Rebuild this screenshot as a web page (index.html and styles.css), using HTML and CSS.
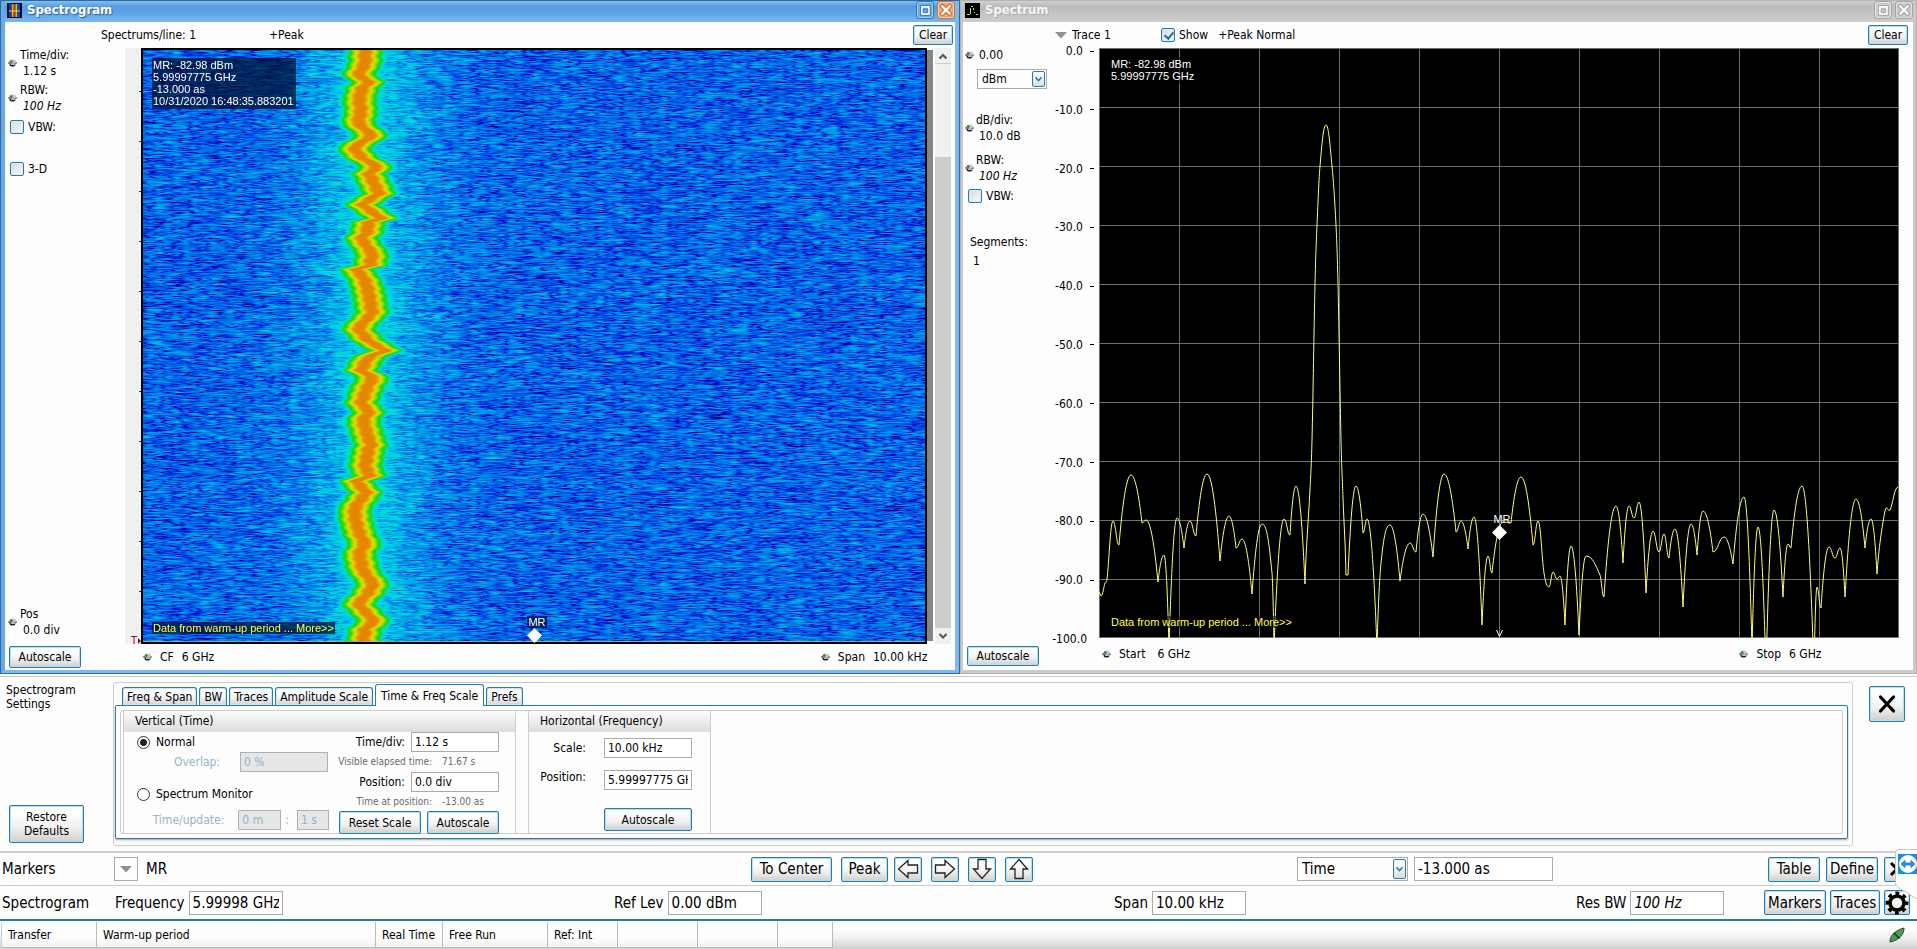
FILE: index.html
```html
<!DOCTYPE html>
<html lang="en">
<head>
    <meta charset="utf-8">
    <title>Spectrogram</title>
    <link rel="stylesheet" href="styles.css">
</head>
<body>
    <svg class="defs" width="0" height="0" aria-hidden="true">
        <symbol id="knob" viewBox="0 0 9 8">
            <ellipse cx="4.5" cy="5" rx="3" ry="2.6" fill="#1c1c50"/>
            <rect x="0" y="3" width="9" height="2" rx="1" fill="#777"/>
            <ellipse cx="5" cy="2.6" rx="3" ry="2.2" fill="#c4c8c4"/>
            <circle cx="3.2" cy="2.5" r="1.5" fill="#3f8a33"/>
            <rect x="3" y="5" width="4" height="1" fill="#b8b8d8"/>
        </symbol>
        <symbol id="restore" viewBox="0 0 18 18">
            <path d="M5.5 5.5h8v8h-8z" fill="none" stroke="#fff" stroke-width="2"/>
            <path d="M4 4h11v11H4zM7 8h5v4H7z" fill="none" stroke="currentColor" stroke-width="1"/>
        </symbol>
        <symbol id="close" viewBox="0 0 18 18">
            <path d="M5 5l8 8M13 5l-8 8" stroke="currentColor" stroke-width="5" stroke-linecap="square"/>
            <path d="M5 5l8 8M13 5l-8 8" stroke="#fff" stroke-width="2.6" stroke-linecap="square"/>
        </symbol>
        <symbol id="chevron" viewBox="0 0 13 16">
            <path d="M3 6l3.5 4L10 6" fill="none" stroke="#1e6f9f" stroke-width="1.6"/>
        </symbol>
        <symbol id="arrow" viewBox="0 0 22 20">
            <path d="M1.5 10L11 1.5V6H20.5V14H11V18.5Z" fill="none" stroke="#222" stroke-width="1.3"/>
        </symbol>
    </svg>

    <main class="windows">
        <section class="window active">
            <header class="titlebar">
                <svg class="app-icon" viewBox="0 0 15 15">
                    <rect width="15" height="15" fill="#050530"/>
                    <path d="M3 1v13M12 1v13" stroke="#0d3fb5" stroke-width="2"/>
                    <path d="M5 1v13M10 1v13" stroke="#3fbf5f" stroke-width="1"/>
                    <path d="M6 1v13M9 1v13" stroke="#f2e12a" stroke-width="1.5"/>
                    <path d="M7.5 1v13" stroke="#d42020" stroke-width="2"/>
                    <path d="M2 8h11" stroke="#f2e12a" stroke-width="1"/>
                </svg>
                <h2>Spectrogram</h2>
                <button class="win-btn" aria-label="Restore"><svg><use href="#restore"/></svg></button>
                <button class="win-btn win-close" aria-label="Close"><svg><use href="#close"/></svg></button>
            </header>
            <div class="window-body">
                <div class="plot-header spectrogram-header">
                    <span class="lines">Spectrums/line: 1</span>
                    <span>+Peak</span>
                    <button class="btn clear">Clear</button>
                </div>
                <div class="columns">
                    <div class="side">
                        <div class="knob">
                            <svg class="knob-icon"><use href="#knob"/></svg>
                            <label for="timeDiv">Time/div:</label>
                            <input id="timeDiv" type="text" value="1.12 s">
                        </div>
                        <div class="knob">
                            <svg class="knob-icon"><use href="#knob"/></svg>
                            <label for="rbw1">RBW:</label>
                            <input id="rbw1" class="auto" type="text" value="100 Hz">
                        </div>
                        <label class="check"><input type="checkbox"> VBW:</label>
                        <label class="check check-3d"><input type="checkbox"> 3-D</label>
                        <div class="knob pos">
                            <svg class="knob-icon"><use href="#knob"/></svg>
                            <label for="pos">Pos</label>
                            <input id="pos" type="text" value="0.0 div">
                        </div>
                        <button class="btn autoscale">Autoscale</button>
                    </div>
                    <div class="main">
                        <div class="plot-row">
                            <div class="time-axis">
                                <i></i><i></i><i></i><i></i><i></i><i></i><i></i><i></i><i></i><i></i><i></i>
                                <span class="trigger">T</span>
                            </div>
                            <div class="spectrogram">
                                <canvas id="waterfall" width="780" height="592"></canvas>
                                <p class="readout">MR: -82.98 dBm<br>5.99997775 GHz<br>-13.000 as<br>10/31/2020 16:48:35.883201</p>
                                <a class="notice" href="#">Data from warm-up period ... More&gt;&gt;</a>
                                <div class="marker">
                                    <span>MR</span>
                                    <svg viewBox="0 0 16 16"><path d="M8 0l8 8-8 8-8-8z" fill="#fff"/></svg>
                                </div>
                            </div>
                            <div class="history"></div>
                            <div class="scrollbar">
                                <button aria-label="Scroll up"><svg viewBox="0 0 16 16"><path d="M4.5 10.5L8 7l3.5 3.5" fill="none" stroke="#555" stroke-width="2"/></svg></button>
                                <div class="thumb"></div>
                                <button aria-label="Scroll down"><svg viewBox="0 0 16 16"><path d="M4.5 6L8 9.5 11.5 6" fill="none" stroke="#555" stroke-width="2"/></svg></button>
                            </div>
                        </div>
                        <div class="plot-footer">
                            <div class="inline-knob">
                                <svg class="knob-icon"><use href="#knob"/></svg>
                                <label for="cf">CF</label>
                                <input id="cf" type="text" value="6 GHz">
                            </div>
                            <div class="inline-knob">
                                <svg class="knob-icon"><use href="#knob"/></svg>
                                <label for="spanKnob">Span</label>
                                <input id="spanKnob" type="text" value="10.00 kHz">
                            </div>
                        </div>
                    </div>
                </div>
            </div>
        </section>

        <section class="window inactive">
            <header class="titlebar">
                <svg class="app-icon" viewBox="0 0 15 15">
                    <rect width="15" height="15" fill="#000"/>
                    <path d="M2 11.5h3M5.5 11V5M6 3.5h2M8.5 5v2M9 9.5h1M11 11.5h2" fill="none" stroke="#d8d850" stroke-width="1"/>
                </svg>
                <h2>Spectrum</h2>
                <button class="win-btn" aria-label="Restore"><svg><use href="#restore"/></svg></button>
                <button class="win-btn" aria-label="Close"><svg><use href="#close"/></svg></button>
            </header>
            <div class="window-body">
                <div class="plot-header spectrum-header">
                    <button class="trace-menu"><svg viewBox="0 0 12 7"><path d="M0 0h12L6 6.5z" fill="#8f8f9c"/></svg>Trace 1</button>
                    <label class="check"><input type="checkbox" checked> Show</label>
                    <span class="detector">+Peak Normal</span>
                    <button class="btn clear">Clear</button>
                </div>
                <div class="columns">
                    <div class="side">
                        <div class="inline-knob ref">
                            <svg class="knob-icon"><use href="#knob"/></svg>
                            <input aria-label="Reference level" type="text" value="0.00">
                        </div>
                        <span class="select unit">
                            <select aria-label="Unit"><option>dBm</option></select>
                            <svg><use href="#chevron"/></svg>
                        </span>
                        <div class="knob db-div">
                            <svg class="knob-icon"><use href="#knob"/></svg>
                            <label for="dbDiv">dB/div:</label>
                            <input id="dbDiv" type="text" value="10.0 dB">
                        </div>
                        <div class="knob">
                            <svg class="knob-icon"><use href="#knob"/></svg>
                            <label for="rbw2">RBW:</label>
                            <input id="rbw2" class="auto" type="text" value="100 Hz">
                        </div>
                        <label class="check"><input type="checkbox"> VBW:</label>
                        <p class="segments">Segments:<span>1</span></p>
                        <button class="btn autoscale">Autoscale</button>
                    </div>
                    <div class="main">
                        <div class="plot-row">
                            <div class="level-axis">
                                <span>0.0</span><span>-10.0</span><span>-20.0</span><span>-30.0</span><span>-40.0</span><span>-50.0</span><span>-60.0</span><span>-70.0</span><span>-80.0</span><span>-90.0</span><span>-100.0</span>
                            </div>
                            <div class="spectrum">
                                <svg id="graph" viewBox="0 0 800 590" preserveAspectRatio="none">
                                    <path id="grid"/>
                                    <path id="trace"/>
                                </svg>
                                <p class="readout">MR: -82.98 dBm<br>5.99997775 GHz</p>
                                <a class="notice" href="#">Data from warm-up period ... More&gt;&gt;</a>
                                <div class="marker">
                                    <span>MR</span>
                                    <svg viewBox="0 0 16 16"><path d="M8 0l8 8-8 8-8-8z" fill="#fff"/></svg>
                                </div>
                                <svg class="caret" viewBox="0 0 7 7"><path d="M.5 0l3 6.500 3-6.500" fill="none" stroke="#fff"/></svg>
                            </div>
                        </div>
                        <div class="plot-footer">
                            <div class="inline-knob">
                                <svg class="knob-icon"><use href="#knob"/></svg>
                                <label for="start">Start</label>
                                <input id="start" type="text" value="6 GHz">
                            </div>
                            <div class="inline-knob">
                                <svg class="knob-icon"><use href="#knob"/></svg>
                                <label for="stop">Stop</label>
                                <input id="stop" type="text" value="6 GHz">
                            </div>
                        </div>
                    </div>
                </div>
            </div>
        </section>
    </main>

    <section class="settings">
        <div class="settings-side">
            <h3>Spectrogram<br>Settings</h3>
            <button class="btn restore">Restore<br>Defaults</button>
        </div>
        <div class="tab-group">
            <nav class="tabs">
                <button>Freq &amp; Span</button>
                <button>BW</button>
                <button>Traces</button>
                <button>Amplitude Scale</button>
                <button class="current">Time &amp; Freq Scale</button>
                <button>Prefs</button>
            </nav>
            <div class="tab-panel">
                <div class="panel-frame">
                    <section class="group vertical">
                        <h4>Vertical (Time)</h4>
                        <div class="group-body">
                            <div class="mode">
                                <label class="radio"><input type="radio" name="mode" checked> Normal</label>
                                <div class="field disabled">
                                    <label for="overlap">Overlap:</label>
                                    <input id="overlap" type="text" value="0 %" disabled>
                                </div>
                                <label class="radio monitor"><input type="radio" name="mode"> Spectrum Monitor</label>
                                <div class="field disabled">
                                    <label for="minutes">Time/update:</label>
                                    <input id="minutes" class="minutes" type="text" value="0 m" disabled>
                                    <span>:</span>
                                    <input aria-label="Seconds" class="seconds" type="text" value="1 s" disabled>
                                </div>
                            </div>
                            <div class="scale">
                                <div class="field">
                                    <label for="tdiv">Time/div:</label>
                                    <input id="tdiv" type="text" value="1.12 s">
                                </div>
                                <p class="hint"><span>Visible elapsed time:</span><span>71.67 s</span></p>
                                <div class="field">
                                    <label for="tpos">Position:</label>
                                    <input id="tpos" type="text" value="0.0 div">
                                </div>
                                <p class="hint"><span>Time at position:</span><span>-13.00 as</span></p>
                                <div class="actions">
                                    <button class="btn">Reset Scale</button>
                                    <button class="btn">Autoscale</button>
                                </div>
                            </div>
                        </div>
                    </section>
                    <section class="group horizontal">
                        <h4>Horizontal (Frequency)</h4>
                        <div class="group-body">
                            <div class="field">
                                <label for="fscale">Scale:</label>
                                <input id="fscale" type="text" value="10.00 kHz">
                            </div>
                            <div class="field">
                                <label for="fpos">Position:</label>
                                <input id="fpos" type="text" value="5.99997775 GHz">
                            </div>
                            <button class="btn">Autoscale</button>
                        </div>
                    </section>
                </div>
            </div>
        </div>
        <button class="btn close-settings" aria-label="Close settings">
            <svg viewBox="0 0 20 20"><path d="M3.5 3l13 14M16.5 3l-13 14" stroke="#000" stroke-width="3.2" stroke-linecap="round"/></svg>
        </button>
    </section>

    <section class="bar markers-bar">
        <span>Markers</span>
        <div class="bar-group marker-pick">
            <button class="drop" aria-label="Select marker"><svg viewBox="0 0 12 7"><path d="M0 0h12L6 6.5z" fill="#8f8f9c"/></svg></button>
            <span>MR</span>
        </div>
        <div class="bar-group moves">
            <button class="btn">To Center</button>
            <button class="btn peak">Peak</button>
            <button class="btn arrow" aria-label="Left"><svg><use href="#arrow"/></svg></button>
            <button class="btn arrow right" aria-label="Right"><svg><use href="#arrow"/></svg></button>
            <button class="btn arrow down" aria-label="Down"><svg><use href="#arrow"/></svg></button>
            <button class="btn arrow up" aria-label="Up"><svg><use href="#arrow"/></svg></button>
        </div>
        <div class="bar-group">
            <span class="select">
                <select aria-label="Marker domain"><option>Time</option></select>
                <svg><use href="#chevron"/></svg>
            </span>
            <input class="wide" aria-label="Marker time" type="text" value="-13.000 as">
        </div>
        <div class="bar-group">
            <button class="btn">Table</button>
            <button class="btn">Define</button>
            <button class="btn square" aria-label="Close markers">
                <svg viewBox="0 0 24 24"><path d="M6 6l12 12M18 6L6 18" stroke="#000" stroke-width="3"/></svg>
            </button>
        </div>
    </section>

    <section class="bar measure-bar">
        <span>Spectrogram</span>
        <div class="bar-group">
            <label for="freq">Frequency</label>
            <input id="freq" type="text" value="5.99998 GHz">
        </div>
        <div class="bar-group">
            <label for="refLev">Ref Lev</label>
            <input id="refLev" type="text" value="0.00 dBm">
        </div>
        <div class="bar-group">
            <label for="span">Span</label>
            <input id="span" type="text" value="10.00 kHz">
        </div>
        <div class="bar-group">
            <label for="resBw">Res BW</label>
            <input id="resBw" class="auto" type="text" value="100 Hz">
        </div>
        <div class="bar-group">
            <button class="btn">Markers</button>
            <button class="btn">Traces</button>
            <button class="btn square" aria-label="Settings">
                <svg viewBox="0 0 24 24">
                    <circle cx="12" cy="12" r="7" fill="none" stroke="#000" stroke-width="3.6"/>
                    <circle cx="12" cy="12" r="9.6" fill="none" stroke="#000" stroke-width="3.6" stroke-dasharray="3.77 3.77" stroke-dashoffset="1.88"/>
                </svg>
            </button>
        </div>
    </section>

    <footer class="status">
        <span class="transfer">Transfer</span>
        <span class="message">Warm-up period</span>
        <span class="real-time">Real Time</span>
        <span class="run">Free Run</span>
        <span class="ref-source">Ref: Int</span>
        <span class="blank"></span>
        <span class="blank"></span>
        <span class="blank last"></span>
        <svg class="plug" viewBox="0 0 16 16">
            <path d="M1 15C1 10 4 4 15 1C15 7 11 13 1 15z" fill="#3fa648" stroke="#3a3a3a" stroke-width="1"/>
            <path d="M5 6l5.5 5.5" stroke="#123" stroke-width="1.2"/>
        </svg>
    </footer>

    <aside class="remote">
        <svg viewBox="0 0 22 50">
            <path d="M24 .5H4Q.5 .5 .5 4V34Q.5 37 3 38.5L24 51z" fill="#fdfdfd" stroke="#c4c4c4"/>
            <rect x="3" y="5" width="20" height="20" fill="#1090ee"/>
            <circle cx="13" cy="15" r="9" fill="#fff"/>
            <path d="M5.5 15l5-4.500v3h5v-3l5 4.500-5 4.500v-3h-5v3z" fill="#2f86e0"/>
        </svg>
    </aside>

    <script src="script.js"></script>
</body>
</html>
```
FILE: styles.css
```css
* { box-sizing: border-box; }
body { margin: 0; min-height: 100vh; display: flex; flex-direction: column; overflow-x: hidden; background: #fdfdfd; color: #000; font-family: "DejaVu Sans Condensed", Tahoma, "Noto Sans", sans-serif; font-size: 12px; line-height: 16px; position: relative; }
h2, h3, h4, p { margin: 0; font-size: inherit; font-weight: normal; }
button, input, select { font: inherit; color: inherit; margin: 0; padding: 0; border: none; background: none; }
svg { display: block; }
.defs { position: absolute; }
.auto { font-style: italic; }

.btn { border: 1px solid #2a7ca8; box-shadow: inset 0 0 0 1px #b9dcee; border-radius: 2px; background: linear-gradient(#ffffff 20%, #f0f0f0 60%, #cfcfcf); white-space: nowrap; padding: 0 8px; display: flex; align-items: center; justify-content: center; }

/* windows */
.windows { flex: 1; display: grid; grid-template-columns: 960fr 957fr; }
.window { display: flex; flex-direction: column; border-style: solid; min-width: 0; }
.active { border-color: #7fb9ee; border-width: 0 5px 4px 5px; border-left-color: #6aa8e2; background: #74b2ec; outline: 1px solid #2f68a6; outline-offset: -1px; }
.inactive { border-color: #c9c9c9; border-width: 0 4px 4px 3px; background: #c9c9c9; outline: 1px solid #b4b4b4; outline-offset: -1px; }
.titlebar { height: 22px; display: flex; align-items: center; gap: 3px; padding: 0 0 2px 2px; color: #fff; text-shadow: 1px 1px 1px #2f5f96; }
.active .titlebar { background: linear-gradient(#8cc4f2, #559cdf 30%, #5fa5e6 60%, #78b8ef); }
.inactive .titlebar { background: linear-gradient(#d4d4d4, #bbbbbb 30%, #c4c4c4 60%, #cdcdcd); text-shadow: 1px 1px 1px #aaa; color: #f6f6f6; }
.titlebar h2 { flex: 1; font-size: 13px; font-weight: bold; padding-left: 2px; }
.app-icon { width: 15px; height: 15px; }
.win-btn { width: 18px; height: 18px; border: 1px solid #3a74b4; border-radius: 3px; box-shadow: inset 0 0 0 1px #a8d0f4; background: #6dadea; color: #3a74b4; }
.win-btn svg { width: 16px; height: 16px; }
.win-close { background: #f2a66c; color: #c9703a; border-color: #b8775c; box-shadow: inset 0 0 0 1px #f9d0ac; }
.inactive .win-btn { border-color: #a6a6a6; background: #cccccc; color: #a2a2a2; box-shadow: inset 0 0 0 1px #e0e0e0; }
.window-body { flex: 1; display: flex; flex-direction: column; background: #fdfdfd; min-width: 0; }
.plot-header { height: 24px; display: flex; align-items: center; padding-top: 2px; }
.spectrogram-header { padding-right: 2px; padding-left: 96px; }
.lines { width: 168px; }
.clear { height: 20px; width: 40px; margin-left: auto; padding: 0; }
.spectrum-header { padding-right: 5px; padding-left: 92px; }
.trace-menu { display: flex; align-items: center; gap: 5px; width: 104px; }
.trace-menu svg { width: 12px; height: 7px; }
.detector { margin-left: 10px; }

.columns { flex: 1; display: flex; min-width: 0; }
.side { width: 120px; display: flex; flex-direction: column; align-items: flex-start; padding: 1px 0 2px 3px; }
.inactive .side { width: 92px; padding: 1px 0 4px 2px; }
.main { flex: 1; display: flex; flex-direction: column; padding-top: 2px; min-width: 0; }
.plot-row { flex: 1; display: flex; min-width: 0; }

.knob { display: grid; grid-template-columns: 9px 1fr; column-gap: 3px; align-items: center; margin-bottom: 3px; }
.inactive .knob { margin-bottom: 8px; column-gap: 2px; }
.knob .knob-icon { grid-row: 1 / 3; }
.knob-icon { width: 9px; height: 8px; }
.knob input { width: 72px; height: 16px; padding-left: 3px; grid-column: 2; }
.inline-knob { display: flex; align-items: center; gap: 8px; }
.inline-knob input { width: 60px; height: 16px; }
.check { display: flex; align-items: center; gap: 4px; margin-left: 2px; line-height: 14px; }
.side .check { margin-top: 3px; }
.side .check-3d { margin-top: 28px; }
.inactive .side .check { margin-top: -3px; margin-left: 3px; }
.check input { appearance: none; width: 14px; height: 14px; border: 1px solid #2a7ca8; border-radius: 2px; background: linear-gradient(135deg, #d8d8d8, #fafafa); box-shadow: inset 0 0 0 1px #d6ecf7; position: relative; }
.check input:checked::after { content: ""; position: absolute; left: 4px; top: 1px; width: 4px; height: 7px; border: solid #1e6f9f; border-width: 0 2px 2px 0; transform: rotate(40deg); }
.pos { margin-top: auto; margin-bottom: 8px; }
.autoscale { height: 22px; width: 72px; margin-left: 1px; padding: 0; }
.inactive .autoscale { height: 20px; margin-left: 2px; }

.ref { gap: 5px; }
.select { position: relative; display: block; }
.select select { appearance: none; width: 100%; height: 100%; border: 1px solid #aaa; padding: 0 4px; background: #fdfdfd; }
.select svg { position: absolute; right: 2px; top: 2px; width: 13px; height: calc(100% - 4px); border: 1px solid #2a7ca8; border-radius: 2px; background: linear-gradient(#ffffff, #dddddd); pointer-events: none; }
.unit { width: 70px; height: 20px; margin: 6px 0 23px 12px; }
.segments { margin: 31px 0 auto 5px; }
.segments span { display: block; margin: 3px 0 0 3px; }

/* spectrogram plot */
.time-axis { width: 16px; background: #f0f0f0; display: flex; flex-direction: column; justify-content: space-between; align-items: flex-end; padding: 43px 0 52px; position: relative; }
.time-axis i { width: 2px; height: 1px; background: #333; }
.trigger { position: absolute; right: 0; bottom: -5px; display: flex; align-items: center; gap: 1px; color: #8a1020; font-size: 11px; }
.trigger::after { content: ""; border: solid transparent; border-width: 3px 0 3px 3px; border-left-color: #8a1020; }
.spectrogram { flex: 1; position: relative; border: 2px solid #000; min-width: 0; }
.spectrogram canvas { position: absolute; inset: 0; width: 100%; height: 100%; }
.readout { position: absolute; left: 9px; top: 8px; margin: 0; padding: 1px 2px 2px 1px; background: rgba(0, 12, 40, .7); color: #fff; font: 11px/12px "Liberation Sans", Arial, sans-serif; white-space: nowrap; }
.notice { position: absolute; left: 9px; bottom: 8px; padding: 0 1px; background: rgba(0, 12, 40, .7); color: #ffff40; text-decoration: none; font: 11px/12px "Liberation Sans", Arial, sans-serif; white-space: nowrap; }
.marker { position: absolute; width: 20px; text-align: center; color: #fff; font: 11px/12px "Liberation Sans", Arial, sans-serif; }
.marker svg { width: 15px; height: 15px; }
.spectrogram .marker { left: calc(50% - 7px); bottom: -1px; }
.spectrogram .marker span { display: block; background: rgba(0, 12, 40, .7); }
.history { width: 6px; background: #858585; margin: 2px 0 3px; }
.scrollbar { width: 16px; margin: 0 4px 0 2px; background: #f0f0f0; display: flex; flex-direction: column; }
.scrollbar button { height: 16px; border-bottom: 1px solid #ccc; }
.scrollbar button:last-child { border: none; }
.scrollbar svg { width: 16px; height: 16px; }
.thumb { flex: 1; margin-top: 93px; background: #cdcdcd; }
.plot-footer { height: 26px; display: flex; justify-content: space-between; align-items: center; }
.active .plot-footer { padding: 0 24px 0 18px; }
.inactive .plot-footer { height: 32px; padding: 0 64px 0 47px; }
#start { margin-left: 4px; }
.active .inline-knob input { width: 58px; }

/* spectrum plot */
.level-axis { width: 44px; margin: -5px 0 -9px; display: flex; flex-direction: column; justify-content: space-between; text-align: right; white-space: nowrap; }
.level-axis span { display: flex; justify-content: flex-end; align-items: center; margin-right: 5px; gap: 7px; }
.level-axis span::after { content: ""; width: 4px; height: 1px; background: #000; }
.spectrum { flex: 1; position: relative; background: #000; min-width: 0; margin-right: 14px; }
#graph { position: absolute; inset: 0; width: 100%; height: 100%; }
#grid { fill: none; stroke: #6e6e6e; stroke-width: 1; vector-effect: non-scaling-stroke; }
#trace { fill: none; stroke: #ffff7a; stroke-width: 1; vector-effect: non-scaling-stroke; }
.spectrum .readout, .spectrum .notice { left: 11px; background: rgba(0, 0, 0, .5); }
.spectrum .readout { top: 9px; }
.spectrum .notice { bottom: 10px; }
.spectrum .marker { left: calc(50% - 7px); top: 465px; }
.caret { position: absolute; left: calc(50% - 3px); bottom: 1px; width: 7px; height: 7px; }

/* settings */
.settings { display: flex; margin-top: 2px; border-top: 1px solid #ccc; border-bottom: 2px solid #cfcfcf; padding: 5px 12px 5px 6px; }
.settings-side { width: 107px; display: flex; flex-direction: column; justify-content: space-between; align-items: flex-start; line-height: 14px; padding: 1px 0 3px; }
.restore { width: 75px; height: 38px; margin-left: 3px; }
.tab-group { flex: 1; border: 1px solid #ccc; border-radius: 3px; padding: 0 4px 6px 1px; min-width: 0; }
.tabs { display: flex; align-items: flex-end; gap: 2px; padding-left: 7px; height: 22px; }
.tabs button { height: 18px; border: 1px solid #2a7ca8; border-width: 1px 1px 0; border-radius: 3px 3px 0 0; padding: 0 4px; background: linear-gradient(#fdfdfd 40%, #d4d4d4); white-space: nowrap; box-shadow: inset 0 0 0 1px #cfe6f2; }
.tabs .current { height: 22px; background: #fdfdfd; margin-bottom: -1px; padding: 0 5px; box-shadow: none; position: relative; }
.tab-panel { border: 1px solid #2a7ca8; border-radius: 2px; padding: 4px; box-shadow: 0 1px 2px #a0a0a0; }
.panel-frame { display: flex; gap: 12px; border: 1px solid #ccc; border-radius: 3px; padding-left: 2px; height: 124px; }
.group { border: 1px solid #ccc; border-bottom: none; border-top: none; height: 122px; }
.group h4 { height: 21px; padding: 2px 11px; background: linear-gradient(#fdfdfd, #dcdcdc); }
.vertical { width: 393px; }
.horizontal { width: 183px; }
.group-body { display: flex; }
.field { display: flex; align-items: center; justify-content: flex-end; gap: 6px; height: 20px; }
.field input { width: 88px; height: 20px; border: 1px solid #aaa; padding: 0 3px; background: #fff; }
.field.disabled { color: #93b4c6; }
.field.disabled input { background: #e6e6e6; color: #93b4c6; border-color: #b0b0b0; }
.mode { width: 205px; padding-left: 13px; }
.mode .field { justify-content: flex-start; gap: 4px; }
.mode .field label { width: 99px; text-align: right; padding-right: 10px; }
.mode .field label[for="overlap"] { padding-right: 16px; }
.field .minutes { width: 43px; }
.field .seconds { width: 32px; margin-left: 4px; }
.radio { display: flex; align-items: center; gap: 6px; height: 20px; }
.radio input { appearance: none; width: 13px; height: 13px; border: 1px solid #333; border-radius: 50%; background: #fff; }
.radio input:checked { background: radial-gradient(#222 0 3px, #fff 4px); }
.monitor { margin: 12px 0 6px; }
.scale { width: 170px; }
.hint { display: flex; justify-content: flex-end; gap: 10px; height: 20px; align-items: center; color: #6a6a6a; font-size: 10px; white-space: nowrap; }
.hint span:last-child { width: 57px; }
.actions { display: flex; gap: 6px; justify-content: flex-end; margin-top: -1px; }
.actions .btn, .horizontal .btn { height: 23px; padding: 0; }
.actions .btn:first-child { width: 82px; }
.actions .btn:last-child { width: 72px; }
.horizontal .group-body { flex-direction: column; align-items: flex-end; padding: 6px 18px 0 10px; gap: 12px; }
.horizontal .field { width: 100%; gap: 18px; }
.horizontal .field + .field label { padding-bottom: 6px; }
.horizontal .btn { width: 88px; margin-top: 6px; }
.close-settings { width: 36px; height: 36px; margin: 4px 0 0 16px; padding: 0; }
.close-settings svg { width: 20px; height: 20px; }

/* bottom bars */
.bar { display: grid; align-items: center; font-size: 15px; padding-left: 2px; height: 33px; border-bottom: 1px solid #ccc; white-space: nowrap; }
.markers-bar { grid-template-columns: 112px 637fr 546fr 471fr 149px; }
.measure-bar { grid-template-columns: 113px 499fr 500fr 462fr 188fr 153px; height: 35px; border-bottom: 2px solid #2a7ca8; }
.bar-group { display: flex; align-items: center; gap: 6px; }
.bar .btn { height: 25px; padding: 0; }
.bar input { height: 24px; width: 94px; border: 1px solid #aaa; padding: 0 3px; background: #fff; }
.bar .select { width: 111px; height: 24px; }
.bar .wide { width: 139px; }
.marker-pick { gap: 8px; }
.drop { width: 24px; height: 24px; border: 1px solid #aaa; display: flex; align-items: center; justify-content: center; }
.drop svg { width: 12px; height: 7px; }
.moves { gap: 9px; }
.moves .btn:first-child { width: 81px; }
.moves .peak { width: 47px; margin-right: -3px; }
.bar .arrow { width: 28px; }
.arrow svg { width: 22px; height: 20px; }
.right svg { transform: rotate(180deg); }
.down svg { transform: rotate(-90deg); }
.up svg { transform: rotate(90deg); }
.markers-bar .bar-group:last-child .btn { width: 52px; }
.measure-bar .bar-group { gap: 4px; }
.measure-bar .bar-group:last-child .btn { padding: 0 3px; }
.bar .bar-group:last-child .square { width: 26px; padding: 0; flex: none; }
.square svg { width: 24px; height: 24px; flex: none; }

.status { display: flex; height: 28px; padding: 1px; background: linear-gradient(#fdfdfd 30%, #f0f0f0 60%, #d0d0d0); }
.status span { background: linear-gradient(#fdfdfd 60%, #f2f2f2); border-right: 1px solid #bbb; border-bottom: 1px solid #bbb; padding: 5px 6px; white-space: nowrap; }
.status .transfer { width: 96px; border-left: 1px solid #ccc; }
.status .message { width: 279px; }
.status .real-time { width: 67px; }
.status .run { width: 105px; }
.status .ref-source { width: 70px; }
.status .blank { width: 80px; }
.status .last { width: 55px; }
.plug { width: 16px; height: 16px; margin: 5px 11px 0 auto; }

.remote { position: absolute; right: 0; bottom: 50px; width: 22px; height: 50px; }
.remote svg { width: 22px; height: 50px; }
```
FILE: script.js
```js
// turning points of the spectrum trace, in graph units
const trace = [
    [0,544],[2,548],[6,535],[8,531],[14,473],[20,497],[32,427],[43,475],[47,472],[59,534],[65,507],[70,600],
    [78,470],[85,500],[91,473],[97,488],[108,426],[121,513],[130,468],[137,500],[143,491],[153,546],[163,476],
    [173,525],[175,600],[185,471],[191,487],[197,438],[206,536],[211,441],[213,392],[216,236],[218,177],[221,118],
    [227,77],[233,118],[237,177],[239,236],[242,392],[244,450],[247,527],[249,527],[257,438],[264,485],[268,471],
    [278,600],[282,515],[291,477],[301,533],[311,495],[317,504],[324,466],[334,509],[345,426],[357,484],[362,473],
    [369,501],[375,469],[383,577],[389,508],[393,525],[404,474],[412,475],[422,429],[434,497],[439,473],[445,525],
    [450,539],[454,524],[458,531],[461,528],[466,577],[472,498],[480,587],[487,508],[501,527],[505,549],[517,458],
    [524,515],[530,458],[535,470],[540,454],[547,545],[554,483],[560,504],[565,486],[570,510],[576,481],[584,559],
    [592,476],[598,507],[604,463],[614,504],[625,489],[634,516],[645,449],[653,600],[659,479],[667,625],[675,462],
    [684,549],[689,496],[692,500],[703,438],[715,625],[718,539],[722,560],[730,499],[736,510],[741,500],[746,549],
    [757,451],[766,500],[772,471],[778,526],[786,463],[791,462],[799,439]
];

// control point next to p on the way to q; o is the point on p's other side
function handle(p, q, o) {
    const dx = q[0] - p[0];
    const dy = q[1] - p[1];
    const turn = !o || (p[1] - o[1]) * dy <= 0;
    if (!turn) return [p[0] + dx / 3, p[1] + (q[1] - o[1]) / (q[0] - o[0]) * dx / 3];
    if (dy < -25) return [p[0] + dx * 0.2, p[1] + dy * 0.4];
    return [p[0] + dx * 0.45, p[1]];
}

function drawSpectrum() {
    let grid = '';
    for (let i = 0; i <= 10; i++) {
        const x = Math.min(i * 80 + 0.5, 799.5);
        const y = Math.min(i * 59 + 0.5, 589.5);
        grid += `M${x} 0V590M0 ${y}H800`;
    }
    document.getElementById('grid').setAttribute('d', grid);

    let d = 'M' + trace[0];
    for (let i = 0; i < trace.length - 1; i++) {
        const a = trace[i];
        const b = trace[i + 1];
        d += `C${handle(a, b, trace[i - 1])} ${handle(b, a, trace[i + 2])} ${b}`;
    }
    document.getElementById('trace').setAttribute('d', d);
}

// [line, x] of the carrier
const carrier = [
    [0,222],[13,222],[25,215],[31,226],[38,219],[50,216],[60,218],[73,215],[85,229],[97,211],[106,217],[116,234],
    [123,226],[143,236],[154,219],[168,238],[172,225],[182,224],[188,218],[203,229],[215,227],[219,213],[228,221],
    [240,225],[250,227],[263,229],[270,222],[278,215],[290,225],[300,242],[307,225],[320,218],[327,230],[337,224],
    [353,218],[361,226],[370,220],[387,225],[394,228],[400,225],[417,222],[425,227],[431,213],[442,223],[457,212],
    [467,212],[485,217],[493,222],[503,216],[520,220],[533,230],[543,225],[553,215],[571,231],[578,222],[592,220]
];

const palette = [
    [0, 0, 0, 60], [0.1, 0, 0, 180], [0.25, 0, 55, 225], [0.45, 0, 140, 230], [0.62, 0, 218, 228],
    [0.70, 0, 225, 150], [0.76, 20, 215, 10], [0.86, 225, 225, 0], [0.94, 230, 140, 0], [1, 228, 128, 0]
];

function color(v) {
    v = Math.max(0, Math.min(1, v));
    let i = 1;
    while (i < palette.length - 1 && palette[i][0] < v) i++;
    const a = palette[i - 1];
    const b = palette[i];
    const t = (v - a[0]) / (b[0] - a[0]);
    return [1, 2, 3].map(k => a[k] + (b[k] - a[k]) * t);
}

let seed = 20201031;
function random() {
    seed = (seed * 1664525 + 1013904223) % 4294967296;
    return seed / 4294967296;
}
function gauss() {
    return (random() + random() + random() + random() - 2) * 1.7;
}

function carrierAt(line) {
    let i = 1;
    while (i < carrier.length - 1 && carrier[i][0] < line) i++;
    const a = carrier[i - 1];
    const b = carrier[i];
    return a[1] + (b[1] - a[1]) * (line - a[0]) / (b[0] - a[0]) + Math.sin(line * 0.8) - 1;
}

function drawWaterfall() {
    const canvas = document.getElementById('waterfall');
    const ctx = canvas.getContext('2d');
    const w = canvas.width;
    const h = canvas.height;
    const img = ctx.createImageData(w, h);
    const step = 9;
    const n = Math.ceil(w / step) + 3;
    const re = new Float32Array(n);
    const im = new Float32Array(n);
    for (let y = 0; y < h; y++) {
        for (let k = 0; k < n; k++) {
            re[k] = re[k] * 0.45 + gauss() * 0.87;
            im[k] = im[k] * 0.45 + gauss() * 0.87;
        }
        const shift = random() * 6;
        const c = carrierAt(y);
        for (let x = 0; x < w; x++) {
            const p = (x + shift) / step;
            const k = Math.floor(p);
            const t = p - k;
            const r = re[k] * (1 - t) + re[k + 1] * t;
            const m = im[k] * (1 - t) + im[k + 1] * t;
            const noise = Math.log(r * r + m * m + 0.02);
            const dist = Math.abs(x - c);
            const far = Math.abs(x - 222);
            const halo = Math.exp(-Math.pow(far / 62, 1.6));
            let v = 0.37 + 0.24 * halo + (0.088 - 0.035 * halo) * noise;
            v = Math.min(v, 0.64);
            if (dist < 24) {
                const ridge = 0.97 - Math.max(0, dist - 3) * 0.0175;
                const mix = dist < 16 ? 1 : (24 - dist) / 8;
                v = Math.max(v, ridge) * mix + v * (1 - mix);
            }
            const rgb = y === h - 1 ? [150 + noise * 30, 170, 150] : color(v);
            const o = (y * w + x) * 4;
            img.data[o] = rgb[0];
            img.data[o + 1] = rgb[1];
            img.data[o + 2] = rgb[2];
            img.data[o + 3] = 255;
        }
    }
    ctx.putImageData(img, 0, 0);
}

drawSpectrum();
drawWaterfall();
```
